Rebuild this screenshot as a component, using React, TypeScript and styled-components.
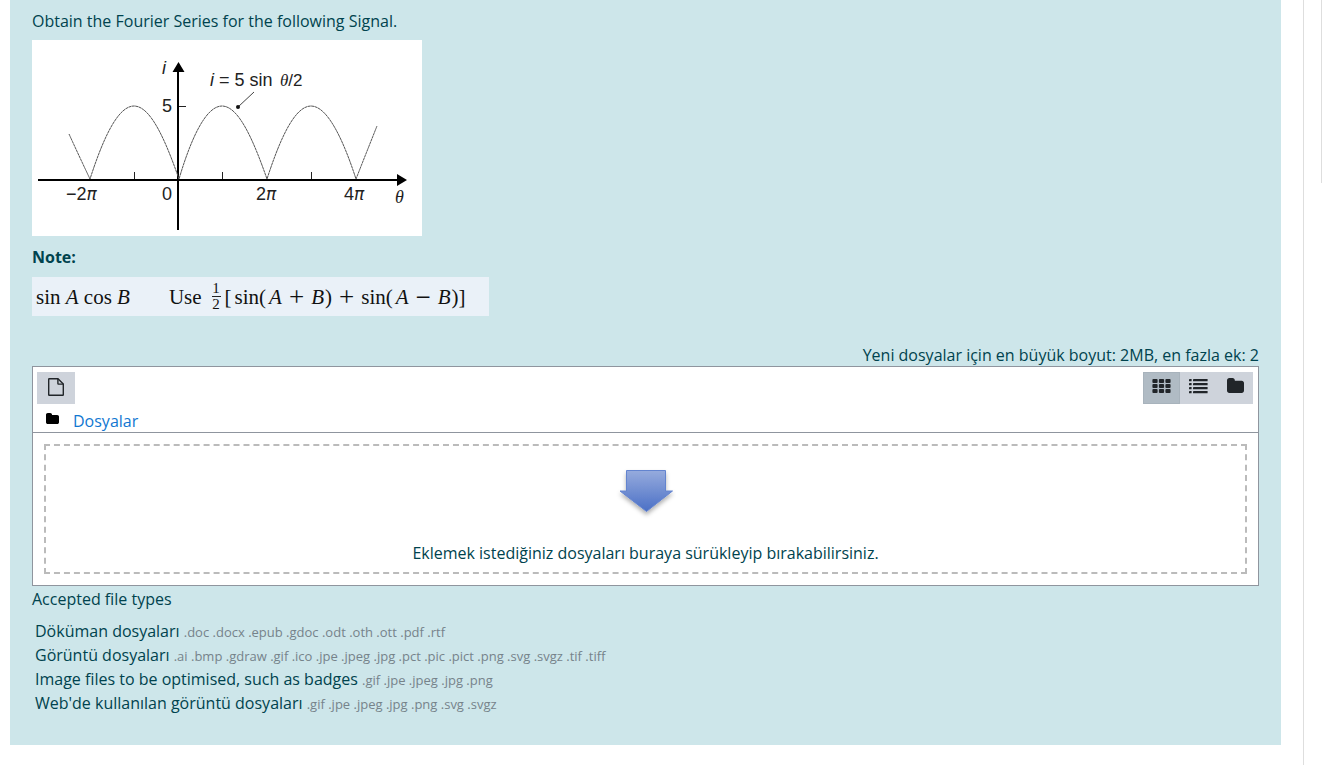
import React from "react";
import styled, { createGlobalStyle } from "styled-components";

const GlobalStyle = createGlobalStyle`
  *, *::before, *::after { box-sizing: border-box; }
  body {
    margin: 0;
    background: #fff;
    color: #00434e;
    font: 16px/24px "Open Sans", "Noto Sans", sans-serif;
  }
`;

const Page = styled.div`
  display: flex;
  align-items: flex-start;
  min-height: 100vh;
`;

const Main = styled.main`
  flex: 1;
  min-width: 0;
  min-height: 100vh;
  padding: 0 22px 20px 10px;
  border-right: 1px solid #dedede;
`;

const Drawer = styled.aside`
  width: 18px;
  height: 183px;
  border-right: 1px solid #dedede;
`;

const Question = styled.section`
  padding: 9px 22px 30px;
  background: #cde6ea;
`;

const Prompt = styled.p`
  margin: 0 0 7px;
`;

const Chart = styled.svg`
  display: block;
  width: 390px;
  height: 196px;
  background: #fff;
  font-family: "Liberation Sans", Arial, sans-serif;
  font-size: 18px;
  fill: #222;
`;

const Note = styled.p`
  margin: 9px 0 8px;
  font-weight: 700;
`;

const Formula = styled.div`
  display: flex;
  align-items: center;
  width: 457px;
  height: 39px;
  padding-left: 4px;
  background: #eaf1f8;
  color: #111;
  font: 21px/24px "Liberation Serif", "Times New Roman", serif;
  white-space: nowrap;
`;

const Term = styled.span<{ $after?: number }>`
  margin-right: ${(p) => p.$after ?? 0}px;
`;

const Operator = styled.span`
  margin: 0 7px;
  font-size: 27px;
`;

const Fraction = styled.span`
  display: flex;
  flex-direction: column;
  width: 9px;
  margin-right: 4px;
  font-size: 15px;
  line-height: 15px;
  text-align: center;

  span + span { border-top: 1px solid #222; }
`;

const Limits = styled.p`
  margin: 27px 0 -1px;
  text-align: right;
`;

const Manager = styled.div`
  border: 1px solid #8f959e;
  background: #fff;
`;

const Toolbar = styled.div`
  display: flex;
  justify-content: space-between;
  padding: 5px 5px 0 4px;
`;

const ViewGroup = styled.div`
  display: flex;
`;

const ToolButton = styled.button<{ $active?: boolean; $width?: number }>`
  display: flex;
  align-items: flex-start;
  justify-content: center;
  width: ${(p) => p.$width ?? 37}px;
  height: 32px;
  padding: 5px 0 0;
  border: 1px solid ${(p) => (p.$active ? "#a8b3bc" : "#ced3db")};
  background: ${(p) => (p.$active ? "#b0bbc4" : "#ced3db")};
  color: #212529;
  cursor: pointer;
`;

const PathBar = styled.nav`
  display: flex;
  align-items: flex-start;
  gap: 14px;
  height: 29px;
  padding: 5px 13px 0;
  border-bottom: 1px solid #8f959e;
  color: #000;

  svg { margin-top: 4px; }
`;

const PathLink = styled.a`
  color: #1177d1;
  text-decoration: none;
`;

const DropArea = styled.div`
  display: flex;
  flex-direction: column;
  align-items: center;
  gap: 19px;
  height: 130px;
  margin: 11px;
  padding-top: 22px;
  border: 2px dashed #bbb;
  text-align: center;
`;

const TypesTitle = styled.p`
  margin: 1px 0 8px;
`;

const TypeList = styled.ul`
  margin: 0;
  padding: 0 3px;
  list-style: none;
`;

const Extensions = styled.small`
  color: #76838a;
  font-size: 13px;
  line-height: 16px;
`;

const cells = [0, 1, 2];

const GridIcon = () => (
  <svg width="19" height="16" viewBox="0 0 19 16" fill="currentColor" aria-hidden="true">
    {cells.map((r) =>
      cells.map((c) => (
        <rect key={`${r}${c}`} x={0.4 + c * 6.5} y={1 + r * 5} width="5.2" height="4" rx="1" />
      ))
    )}
  </svg>
);

const ListIcon = () => (
  <svg width="19" height="16" viewBox="0 0 19 16" fill="currentColor" aria-hidden="true">
    {[1, 5, 9, 13].map((y) => (
      <g key={y}>
        <rect x="0" y={y} width="2.6" height="2.3" rx="0.4" />
        <rect x="4" y={y} width="14.6" height="2.3" rx="0.4" />
      </g>
    ))}
  </svg>
);

const FolderIcon = ({ width, height }: { width: number; height: number }) => (
  <svg width={width} height={height} viewBox="0 0 1664 1408" preserveAspectRatio="none" fill="currentColor" aria-hidden="true">
    <path d="M1664 480v704q0 92-66 158t-158 66H224q-92 0-158-66T0 1184V224Q0 132 66 66T224 0h320q92 0 158 66t66 158v32h672q92 0 158 66t66 158z" />
  </svg>
);

const FileIcon = () => (
  <svg width="16" height="18" viewBox="0 0 16 18" fill="none" stroke="currentColor" strokeWidth="1.4" strokeLinejoin="round" aria-hidden="true">
    <path d="M.7 1.2Q.7.7 1.2.7H10L15.3 6V16.8Q15.3 17.3 14.8 17.3H1.2Q.7 17.3.7 16.8Z" />
    <path d="M9.9.7V5.6Q9.9 6.1 10.4 6.1H15.3" />
  </svg>
);

const DropArrow = () => (
  <svg width="60" height="54" viewBox="0 0 60 54" aria-hidden="true">
    <defs>
      <linearGradient id="arrowFill" x1="0" y1="0" x2="0" y2="1">
        <stop offset="0" stopColor="#96abdd" />
        <stop offset="1" stopColor="#4b70c6" />
      </linearGradient>
      <filter id="arrowShadow" x="-20%" y="-20%" width="140%" height="150%">
        <feDropShadow dx="0" dy="3" stdDeviation="2" floodColor="#000" floodOpacity="0.3" />
      </filter>
    </defs>
    <path d="M10.5 2.5H49.5V23H56.5L30.5 43.5 4 23H10.5Z" fill="url(#arrowFill)" stroke="#6484cf" filter="url(#arrowShadow)" />
  </svg>
);

const Pi = () => (
  <tspan fontFamily="DejaVu Sans" fontStyle="italic" fontSize="17">π</tspan>
);

const SignalChart = () => (
  <Chart viewBox="0 0 390 196" role="img" aria-label="i = 5 sin θ/2">
    <g stroke="#000" strokeWidth="2" fill="none">
      <path d="M6 140H368M146 26V190" />
    </g>
    <path d="M365 134L375 140 365 146ZM140.500 32L146.500 22 152.500 32Z" fill="#000" />
    <path d="M102.500 132V139M190.500 132V139M279.500 132V139M147 66.500H154" stroke="#222" fill="none" />
    <g stroke="#555" strokeWidth="1" fill="none" strokeDasharray="3 0.4">
      <path d="M37 94Q48 118 58 139C70 102 85 66 102 66S134 102 147 139C158 102 173 66 190 66S222 102 235 139C247 102 262 66 279 66S312 102 324 139Q335 111 345 86" />
    </g>
    <path d="M222 52L206 67" stroke="#444" />
    <circle cx="206" cy="67" r="2" fill="#111" />
    <text x="130" y="34" fontStyle="italic">i</text>
    <text x="130" y="72">5</text>
    <text x="178" y="46"><tspan fontStyle="italic">i</tspan> = 5 sin</text>
    <text x="248" y="46" fontSize="17"><tspan fontFamily="Liberation Serif" fontStyle="italic">θ</tspan>/2</text>
    <text x="34" y="160">−2<Pi /></text>
    <text x="130" y="160">0</text>
    <text x="224" y="160">2<Pi /></text>
    <text x="312" y="160">4<Pi /></text>
    <text x="363" y="163" fontFamily="Liberation Serif" fontStyle="italic">θ</text>
  </Chart>
);

const fileTypes = [
  ["Döküman dosyaları", ".doc .docx .epub .gdoc .odt .oth .ott .pdf .rtf"],
  ["Görüntü dosyaları", ".ai .bmp .gdraw .gif .ico .jpe .jpeg .jpg .pct .pic .pict .png .svg .svgz .tif .tiff"],
  ["Image files to be optimised, such as badges", ".gif .jpe .jpeg .jpg .png"],
  ["Web'de kullanılan görüntü dosyaları", ".gif .jpe .jpeg .jpg .png .svg .svgz"],
];

export default function App() {
  return (
    <Page>
      <GlobalStyle />
      <Main>
        <Question>
          <Prompt>Obtain the Fourier Series for the following Signal.</Prompt>
          <SignalChart />
          <Note>Note:</Note>
          <Formula>
            <Term $after={39}>sin <i>A</i> cos <i>B</i></Term>
            <Term $after={10}>Use</Term>
            <Fraction>
              <span>1</span>
              <span>2</span>
            </Fraction>
            <Term $after={3}>[</Term>
            <Term $after={3}>sin(</Term>
            <i>A</i>
            <Operator>+</Operator>
            <Term $after={1}><i>B</i></Term>
            <Term>)</Term>
            <Operator>+</Operator>
            <Term $after={3}>sin(</Term>
            <i>A</i>
            <Operator>−</Operator>
            <Term $after={1}><i>B</i></Term>
            <Term>)]</Term>
          </Formula>
          <Limits>Yeni dosyalar için en büyük boyut: 2MB, en fazla ek: 2</Limits>
          <Manager>
            <Toolbar>
              <ToolButton type="button" $width={38} aria-label="Ekle"><FileIcon /></ToolButton>
              <ViewGroup>
                <ToolButton type="button" $active aria-label="Simge"><GridIcon /></ToolButton>
                <ToolButton type="button" aria-label="Liste"><ListIcon /></ToolButton>
                <ToolButton type="button" $width={36} aria-label="Klasör"><FolderIcon width={17} height={15} /></ToolButton>
              </ViewGroup>
            </Toolbar>
            <PathBar>
              <FolderIcon width={13} height={11} />
              <PathLink href="#">Dosyalar</PathLink>
            </PathBar>
            <DropArea>
              <DropArrow />
              <span>Eklemek istediğiniz dosyaları buraya sürükleyip bırakabilirsiniz.</span>
            </DropArea>
          </Manager>
          <TypesTitle>Accepted file types</TypesTitle>
          <TypeList>
            {fileTypes.map(([name, extensions]) => (
              <li key={name}>
                {name} <Extensions>{extensions}</Extensions>
              </li>
            ))}
          </TypeList>
        </Question>
      </Main>
      <Drawer />
    </Page>
  );
}
